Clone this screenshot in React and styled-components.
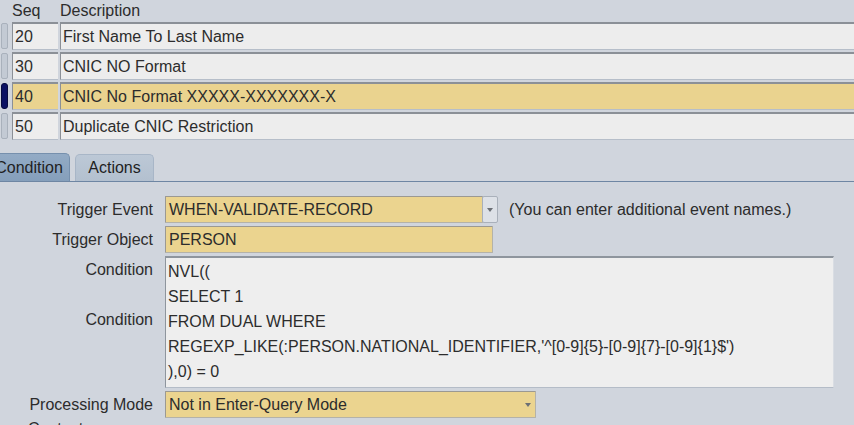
import styled, { createGlobalStyle } from "styled-components";

const GlobalStyle = createGlobalStyle`
  html, body {
    margin: 0;
    padding: 0;
    background: #d0d5dd;
    overflow: hidden;
  }
  body {
    font-family: "Liberation Sans", Arial, sans-serif;
    font-size: 16px;
    color: #2c2c2c;
  }
`;

const Page = styled.div`
  width: 854px;
  height: 425px;
  overflow: hidden;
  background: #d0d5dd;
`;

const HeaderRow = styled.div`
  display: flex;
  height: 22px;
  align-items: center;
  padding-left: 12px;
`;

const HeaderCell = styled.div`
  width: ${(p) => p.$w || "auto"};
`;

const Grid = styled.div`
  display: flex;
  flex-direction: column;
  gap: 2px;
`;

const Row = styled.div`
  display: flex;
  align-items: stretch;
  height: 28px;
`;

const Indicator = styled.div`
  width: 7px;
  margin: 1px 4px 1px 1px;
  border-radius: ${(p) => (p.$current ? "3px" : "2px")};
  background: ${(p) => (p.$current ? "#0b1163" : "#c3cad4")};
  border: 1px solid ${(p) => (p.$current ? "#070b40" : "#a9b1bc")};
  box-sizing: border-box;
`;

const Cell = styled.div`
  box-sizing: border-box;
  display: flex;
  align-items: center;
  padding-left: 2px;
  white-space: nowrap;
  overflow: hidden;
  background: ${(p) => (p.$current ? "#ead38f" : "#ededed")};
  border-top: 2px solid #8b9097;
  border-left: 1px solid #8b9097;
  border-bottom: 1px solid #b6bec9;
  width: ${(p) => p.$w || "auto"};
  flex: ${(p) => (p.$grow ? 1 : "none")};
  margin-right: ${(p) => (p.$grow ? "-10px" : "2px")};
`;

const TabStrip = styled.div`
  display: flex;
  gap: 5px;
  margin-top: 13px;
  margin-left: -12px;
  height: 28px;
  border-bottom: 1px solid #6e86a3;
`;

const Tab = styled.div`
  box-sizing: border-box;
  width: ${(p) => p.$w};
  height: ${(p) => (p.$active ? "28px" : "27px")};
  align-self: flex-end;
  display: flex;
  align-items: center;
  justify-content: center;
  border-radius: 5px 5px 0 0;
  border: 1px solid ${(p) => (p.$active ? "#7690ad" : "#a8b6c7")};
  border-bottom: none;
  background: ${(p) =>
    p.$active
      ? "linear-gradient(#93abc5, #859fbb)"
      : "linear-gradient(#bcc8d6, #b3c0cf)"};
  color: #1f1f1f;
`;

const Form = styled.div`
  display: grid;
  grid-template-columns: 153px 1fr;
  column-gap: 12px;
  row-gap: 3px;
  padding-top: 14px;
`;

const Label = styled.div`
  text-align: right;
  white-space: nowrap;
  line-height: ${(p) => (p.$lh ? p.$lh : "27px")};
`;

const LabelStack = styled.div`
  display: flex;
  flex-direction: column;
  padding-top: 1px;
`;

const FieldLine = styled.div`
  display: flex;
  align-items: center;
  gap: 11px;
  height: 27px;
`;

const Combo = styled.div`
  display: flex;
  height: 27px;
  width: ${(p) => p.$w};
`;

const Input = styled.div`
  box-sizing: border-box;
  flex: 1;
  height: 27px;
  display: flex;
  align-items: center;
  padding-left: 3px;
  white-space: nowrap;
  background: #ebd48f;
  border: 1px solid #b4b2a8;
  border-top-color: #9b9992;
  border-left-color: #9b9992;
  border-radius: 1px;
`;

const DropButton = styled.div`
  box-sizing: border-box;
  width: ${(p) => (p.$inside ? "15px" : "16px")};
  margin-left: ${(p) => (p.$inside ? "-16px" : "-1px")};
  height: 27px;
  display: flex;
  align-items: center;
  justify-content: center;
  background: ${(p) => (p.$inside ? "transparent" : "#dde1e7")};
  border: ${(p) => (p.$inside ? "none" : "1px solid #a9b0ba")};
  border-radius: 2px;
`;

const Arrow = styled.span`
  width: 0;
  height: 0;
  border-left: 3px solid transparent;
  border-right: 3px solid transparent;
  border-top: 4px solid #6b6f75;
`;

const Hint = styled.span`
  white-space: nowrap;
`;

const TextArea = styled.div`
  box-sizing: border-box;
  width: 669px;
  height: 132px;
  padding: 1px 0 0 2px;
  line-height: 25px;
  background: #eeeeee;
  border-top: 2px solid #8e959d;
  border-left: 1px solid #8e959d;
  border-bottom: 1px solid #b4bcc7;
  border-right: 1px solid #d9dde3;
  white-space: pre;
`;

const SectionTitle = styled.div`
  grid-column: 1 / span 2;
  padding-left: 28px;
  line-height: 16px;
  margin-top: 0;
`;

const rows = [
  { seq: "20", desc: "First Name To Last Name" },
  { seq: "30", desc: "CNIC NO Format" },
  { seq: "40", desc: "CNIC No Format XXXXX-XXXXXXX-X", current: true },
  { seq: "50", desc: "Duplicate CNIC Restriction" },
];

const conditionText = [
  "NVL((",
  "SELECT 1",
  "FROM DUAL WHERE",
  "REGEXP_LIKE(:PERSON.NATIONAL_IDENTIFIER,'^[0-9]{5}-[0-9]{7}-[0-9]{1}$')",
  "),0) = 0",
];

export default function App() {
  return (
    <Page>
      <GlobalStyle />
      <HeaderRow>
        <HeaderCell $w="48px">Seq</HeaderCell>
        <HeaderCell>Description</HeaderCell>
      </HeaderRow>
      <Grid>
        {rows.map((r) => (
          <Row key={r.seq}>
            <Indicator $current={r.current} />
            <Cell $w="46px" $current={r.current}>
              {r.seq}
            </Cell>
            <Cell $grow $current={r.current}>
              {r.desc}
            </Cell>
          </Row>
        ))}
      </Grid>

      <TabStrip>
        <Tab $active $w="82px">Condition</Tab>
        <Tab $w="79px">Actions</Tab>
      </TabStrip>

      <Form>
        <Label>Trigger Event</Label>
        <FieldLine>
          <Combo $w="333px">
            <Input>WHEN-VALIDATE-RECORD</Input>
            <DropButton>
              <Arrow />
            </DropButton>
          </Combo>
          <Hint>(You can enter additional event names.)</Hint>
        </FieldLine>

        <Label>Trigger Object</Label>
        <FieldLine>
          <Combo $w="328px">
            <Input>PERSON</Input>
          </Combo>
        </FieldLine>

        <LabelStack>
          <Label $lh="25px">Condition</Label>
          <Label $lh="25px">&nbsp;</Label>
          <Label $lh="25px">Condition</Label>
        </LabelStack>
        <TextArea>{conditionText.join("\n")}</TextArea>

        <Label>Processing Mode</Label>
        <FieldLine>
          <Combo $w="370px">
            <Input>Not in Enter-Query Mode</Input>
            <DropButton $inside>
              <Arrow />
            </DropButton>
          </Combo>
        </FieldLine>

        <SectionTitle>Context</SectionTitle>
      </Form>
    </Page>
  );
}
